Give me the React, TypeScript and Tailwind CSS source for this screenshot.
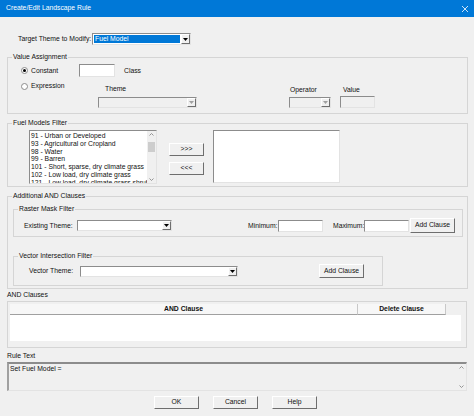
import type { ReactNode } from "react";

const sunken =
  "border border-t-[#8c8c8c] border-l-[#8c8c8c] border-r-[#e3e3e3] border-b-[#e3e3e3]";
const raised =
  "border border-t-white border-l-white border-r-[#6e6e6e] border-b-[#6e6e6e] bg-[#f0f0f0]";

function Arrow({ disabled = false }: { disabled?: boolean }) {
  return (
    <svg width="5" height="3" viewBox="0 0 5 3">
      <path d="M0 0h5L2.5 3z" fill={disabled ? "#a0a0a0" : "#000"} />
    </svg>
  );
}

function Select({
  className,
  value,
  disabled = false,
}: {
  className: string;
  value?: string;
  disabled?: boolean;
}) {
  return (
    <div className={`${sunken} flex ${disabled ? "bg-[#f0f0f0]" : "bg-white"} ${className}`}>
      <div className="flex-1 p-[1px]">
        {value && (
          <div className="h-full bg-[#0078d7] pl-[1px] leading-[8px] text-white">{value}</div>
        )}
      </div>
      <div className={`${raised} flex w-[9px] items-center justify-center`}>
        <Arrow disabled={disabled} />
      </div>
    </div>
  );
}

function Btn({ className, children }: { className: string; children: ReactNode }) {
  return <div className={`${raised} flex items-center justify-center ${className}`}>{children}</div>;
}

function Radio({ checked }: { checked?: boolean }) {
  return (
    <span className="flex h-[7px] w-[7px] items-center justify-center rounded-full border border-[#8c8c8c] bg-white">
      {checked && <span className="h-[3px] w-[3px] rounded-full bg-black" />}
    </span>
  );
}

function Group({
  label,
  className,
  children,
}: {
  label: string;
  className: string;
  children: ReactNode;
}) {
  return (
    <fieldset className={`border border-[#d5d5d5] ${className}`}>
      <legend className="ml-[4px] px-[1px] leading-[8px]">{label}</legend>
      {children}
    </fieldset>
  );
}

function ScrollBar({ className }: { className: string }) {
  return (
    <div className={`flex w-[9px] flex-col items-center justify-between bg-[#f0f0f0] py-[2px] ${className}`}>
      <svg width="5" height="3" viewBox="0 0 5 3">
        <path d="M0.5 2.5L2.5 0.5L4.5 2.5" stroke="#8a8a8a" fill="none" strokeWidth="0.9" />
      </svg>
      <svg width="5" height="3" viewBox="0 0 5 3">
        <path d="M0.5 0.5L2.5 2.5L4.5 0.5" stroke="#8a8a8a" fill="none" strokeWidth="0.9" />
      </svg>
    </div>
  );
}

const fuelModels = [
  "91 - Urban or Developed",
  "93 - Agricultural or Cropland",
  "98 - Water",
  "99 - Barren",
  "101 - Short, sparse, dry climate grass",
  "102 - Low load, dry climate grass",
  "121 - Low load, dry climate grass shrub",
];

export default function App() {
  return (
    <div className="h-[416px] w-[474px] overflow-hidden whitespace-nowrap bg-[#f0f0f0] font-['Liberation_Sans',Arial,sans-serif] text-[6.8px] text-[#111]">
      <div className="flex h-[17px] items-center justify-between bg-[#0078d7] pl-[6px] pr-[6px] text-[6.8px] text-white">
        <span>Create/Edit Landscape Rule</span>
        <svg width="6" height="6" viewBox="0 0 6 6">
          <path d="M0 0L6 6M6 0L0 6" stroke="#fff" strokeWidth="0.8" />
        </svg>
      </div>

      <div className="pl-[7px]">
        <div className="mt-[16px] flex h-[12px] items-center pl-[11px]">
          <span className="w-[74px] leading-[8px]">Target Theme to Modify:</span>
          <Select className="h-[12px] w-[99px]" value="Fuel Model" />
        </div>

        <Group label="Value Assignment" className="mt-[8px] h-[61px] w-[461px]">
          <div className="mt-[3px] flex h-[13px] items-center pl-[13px]">
            <div className="flex w-[58px] items-center gap-[3px]">
              <Radio checked />
              <span className="leading-[8px]">Constant</span>
            </div>
            <div className={`${sunken} h-[13px] w-[36px] bg-white`} />
            <span className="ml-[9px] leading-[8px]">Class</span>
          </div>
          <div className="flex pl-[13px]">
            <div className="mt-[5px] flex h-[8px] w-[77px] items-center gap-[3px] self-start">
              <Radio />
              <span className="leading-[8px]">Expression</span>
            </div>
            <div className="flex w-[99px] flex-col">
              <span className="mt-[8px] h-[8px] pl-[7px] leading-[8px]">Theme</span>
              <Select className="mt-[4px] h-[11px] w-[99px]" disabled />
            </div>
            <div className="ml-[92px] flex flex-col">
              <span className="mt-[9px] h-[8px] pl-[1px] leading-[8px]">Operator</span>
              <Select className="mt-[3px] h-[11px] w-[42px]" disabled />
            </div>
            <div className="ml-[9px] flex flex-col">
              <span className="mt-[9px] h-[8px] pl-[3px] leading-[8px]">Value</span>
              <div className={`${sunken} mt-[2px] h-[12px] w-[35px] bg-[#f0f0f0]`} />
            </div>
          </div>
        </Group>

        <Group label="Fuel Models Filter" className="mt-[5px] h-[68px] w-[461px]">
          <div className="mt-[3px] flex items-start pl-[21px]">
            <div className={`${sunken} flex h-[54px] w-[128px] overflow-hidden bg-white`}>
              <div className="flex-1 overflow-hidden pl-[1px] pt-[1px] leading-[7.8px]">
                {fuelModels.map((m) => (
                  <div key={m}>{m}</div>
                ))}
              </div>
              <div className="relative flex w-[9px] flex-col">
                <ScrollBar className="h-full" />
                <div className="absolute left-[1px] top-[11px] h-[10px] w-[7px] bg-[#cdcdcd]" />
              </div>
            </div>
            <div className="ml-[12px] flex flex-col">
              <Btn className="mt-[13px] h-[13px] w-[35px]">&gt;&gt;&gt;</Btn>
              <Btn className="mt-[6px] h-[13px] w-[35px]">&lt;&lt;&lt;</Btn>
            </div>
            <div className={`${sunken} ml-[9px] h-[53px] w-[127px] bg-white`} />
          </div>
        </Group>

        <Group label="Additional AND Clauses" className="mt-[5px] h-[97px] w-[461px]">
          <Group label="Raster Mask Filter" className="ml-[5px] mt-[5px] h-[32px] w-[450px]">
            <div className="mt-[5px] flex h-[15px] items-center pl-[10px]">
              <span className="w-[53px] leading-[8px]">Existing Theme:</span>
              <Select className="h-[11px] w-[95px]" />
              <span className="ml-[76px] w-[30px] leading-[8px]">Minimum:</span>
              <div className={`${sunken} h-[12px] w-[45px] bg-white`} />
              <span className="ml-[10px] w-[31px] leading-[8px]">Maximum:</span>
              <div className={`${sunken} h-[12px] w-[45px] bg-white`} />
              <Btn className="ml-[1px] h-[15px] w-[45px]">Add Clause</Btn>
            </div>
          </Group>
          <Group label="Vector Intersection Filter" className="ml-[5px] mt-[15px] h-[34px] w-[370px]">
            <div className="mt-[4px] flex h-[14px] items-center pl-[15px]">
              <span className="w-[51px] leading-[8px]">Vector Theme:</span>
              <Select className="h-[11px] w-[158px]" />
              <Btn className="ml-[81px] h-[14px] w-[45px]">Add Clause</Btn>
            </div>
          </Group>
        </Group>

        <div className="mt-[2px] h-[8px] leading-[8px]">AND Clauses</div>

        <div className="mt-[2px] h-[47px] w-[460px] border border-[#d5d5d5] pl-[2px] pt-[2px]">
          <div className="flex h-[11px] font-bold">
            <div className="flex w-[348px] items-center justify-center border-b border-r border-b-[#a0a0a0] border-r-[#c8c8c8] bg-[#f7f7f7]">
              AND Clause
            </div>
            <div className="flex w-[88px] items-center justify-center border-b border-r border-b-[#a0a0a0] border-r-[#c8c8c8] bg-[#f7f7f7]">
              Delete Clause
            </div>
          </div>
          <div className="h-[26px] w-[451px] bg-white" />
        </div>

        <div className="mt-[4px] h-[8px] leading-[8px]">Rule Text</div>

        <div className="mt-[2px] flex h-[29px] w-[460px] border-l-2 border-t-2 border-r border-b border-t-[#8c8c8c] border-l-[#a0a0a0] border-r-[#e3e3e3] border-b-[#e3e3e3] bg-[#f0f0f0]">
          <div className="flex-1 pl-[1px] pt-[1px] leading-[8px]">Set Fuel Model =</div>
          <ScrollBar className="h-full" />
        </div>

        <div className="ml-[147px] mt-[5px] flex gap-[14px]">
          <Btn className="h-[13px] w-[45px]">OK</Btn>
          <Btn className="h-[13px] w-[45px]">Cancel</Btn>
          <Btn className="h-[13px] w-[45px]">Help</Btn>
        </div>
      </div>
    </div>
  );
}
